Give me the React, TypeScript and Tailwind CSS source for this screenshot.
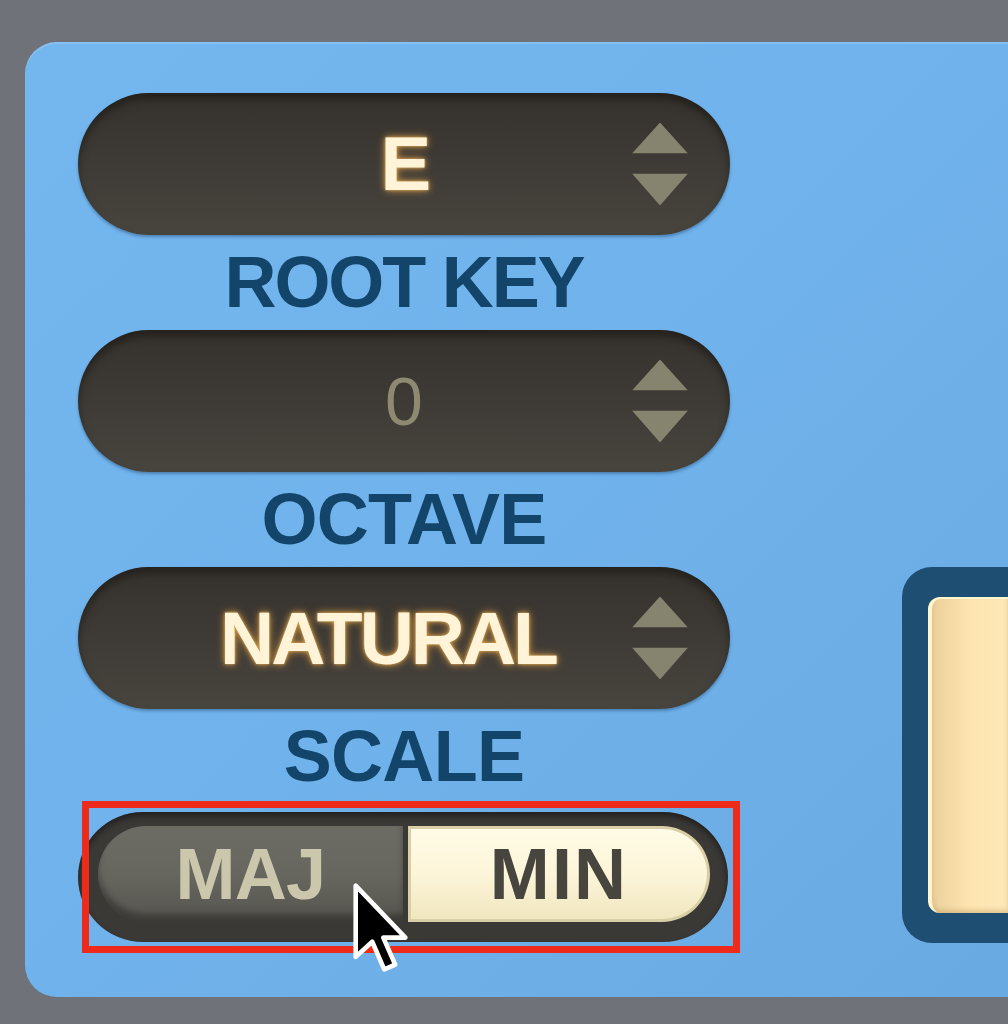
import React from 'react';

const font = { fontFamily: '"Liberation Sans", Arial, sans-serif' };

function Arrows() {
  return (
    <div className="absolute right-[42px] top-1/2 flex -translate-y-1/2 flex-col items-center gap-[20px]">
      <svg width="56" height="31" viewBox="0 0 56 31">
        <polygon points="28,0 56,31 0,31" fill="#86836f" />
      </svg>
      <svg width="56" height="32" viewBox="0 0 56 32">
        <polygon points="0,0 56,0 28,32" fill="#86836f" />
      </svg>
    </div>
  );
}

function SpinBox({ value, valueClass }: { value: string; valueClass: string }) {
  return (
    <div className="relative flex h-[142px] w-[652px] items-center justify-center rounded-full bg-gradient-to-b from-[#35312c] via-[#3e3a35] to-[#48443e] shadow-[inset_0_6px_8px_rgba(0,0,0,0.35),0_2px_3px_rgba(20,60,100,0.4)]">
      <span className={valueClass} style={font}>
        {value}
      </span>
      <Arrows />
    </div>
  );
}

function Label({ text, tracking }: { text: string; tracking: string }) {
  return (
    <div
      className={`h-[95px] text-center text-[72px] font-bold leading-[95px] text-[#13456a] ${tracking}`}
      style={font}
    >
      {text}
    </div>
  );
}

function Cursor() {
  return (
    <svg
      className="absolute left-[273px] top-[69px]"
      width="60"
      height="92"
      viewBox="-1 -1 13 20"
    >
      <path
        d="M0 0 L0 15.5 L3.6 12.2 L6.2 18.2 L8.6 17.2 L6 11.3 L10.8 11.3 Z"
        fill="#000"
        stroke="#fff"
        strokeWidth="1"
        strokeLinejoin="round"
      />
    </svg>
  );
}

function ScaleToggle() {
  return (
    <div className="relative mt-[8px] h-[130px] w-[650px]">
      <div className="flex h-full w-full gap-[5px] rounded-full bg-[#3b3936] pb-[20px] pl-[20px] pr-[18px] pt-[14px] shadow-[inset_0_4px_6px_rgba(0,0,0,0.45)]">
        <div
          className="flex w-[305px] items-center justify-center rounded-l-full rounded-r-[6px] bg-gradient-to-b from-[#6c6b64] via-[#67665f] to-[#55544e] text-[72px] font-bold leading-none tracking-[-0.01em] text-[#cbc7ac] shadow-[inset_0_-8px_6px_rgba(0,0,0,0.3)]"
          style={font}
        >
          MAJ
        </div>
        <div
          className="flex flex-1 items-center justify-center rounded-l-[6px] rounded-r-full border-[3px] border-[#d9cfa6] bg-gradient-to-b from-[#fffbe6] via-[#fcf5d9] to-[#f0e6bf] text-[72px] font-bold leading-none tracking-[0.03em] text-[#47453d]"
          style={font}
        >
          MIN
        </div>
      </div>
      <div className="pointer-events-none absolute -top-[11px] left-[4px] h-[152px] w-[658px] border-[7px] border-[#ee2a1a]" />
      <Cursor />
    </div>
  );
}

const lit =
  'font-bold leading-none text-[#fff4d8] [text-shadow:0_0_8px_rgba(222,160,70,0.95),0_0_3px_rgba(240,190,110,0.9)]';

export default function App() {
  return (
    <div className="h-[1024px] overflow-hidden bg-[#707279] pl-[25px] pt-[42px]">
      <div className="flex h-[955px] items-start rounded-l-[32px] bg-gradient-to-br from-[#74b7ef] via-[#70b2eb] to-[#6aaae3] shadow-[inset_0_2px_0_rgba(255,255,255,0.15)]">
        <div className="ml-[53px] mt-[51px] flex flex-col">
          <SpinBox value="E" valueClass={`${lit} text-[76px] tracking-[-0.05em]`} />
          <Label text="ROOT KEY" tracking="tracking-[-0.03em]" />
          <SpinBox value="0" valueClass="text-[68px] leading-none text-[#8e8a72]" />
          <Label text="OCTAVE" tracking="tracking-[-0.01em]" />
          <SpinBox value="NATURAL" valueClass={`${lit} mr-[32px] text-[75px] tracking-[-0.04em]`} />
          <Label text="SCALE" tracking="tracking-[-0.01em]" />
          <ScaleToggle />
        </div>
        <div className="ml-[172px] mt-[525px] h-[376px] flex-1 rounded-l-[30px] bg-[#1f4e73] py-[30px] pl-[26px]">
          <div className="h-full rounded-l-[12px] border-l-[4px] border-t-[2px] border-[#fff6cf] bg-gradient-to-r from-[#ecd09c] via-[#fde4b0] to-[#fee9b8] shadow-[inset_0_-3px_4px_rgba(160,120,60,0.3)]" />
        </div>
      </div>
    </div>
  );
}
